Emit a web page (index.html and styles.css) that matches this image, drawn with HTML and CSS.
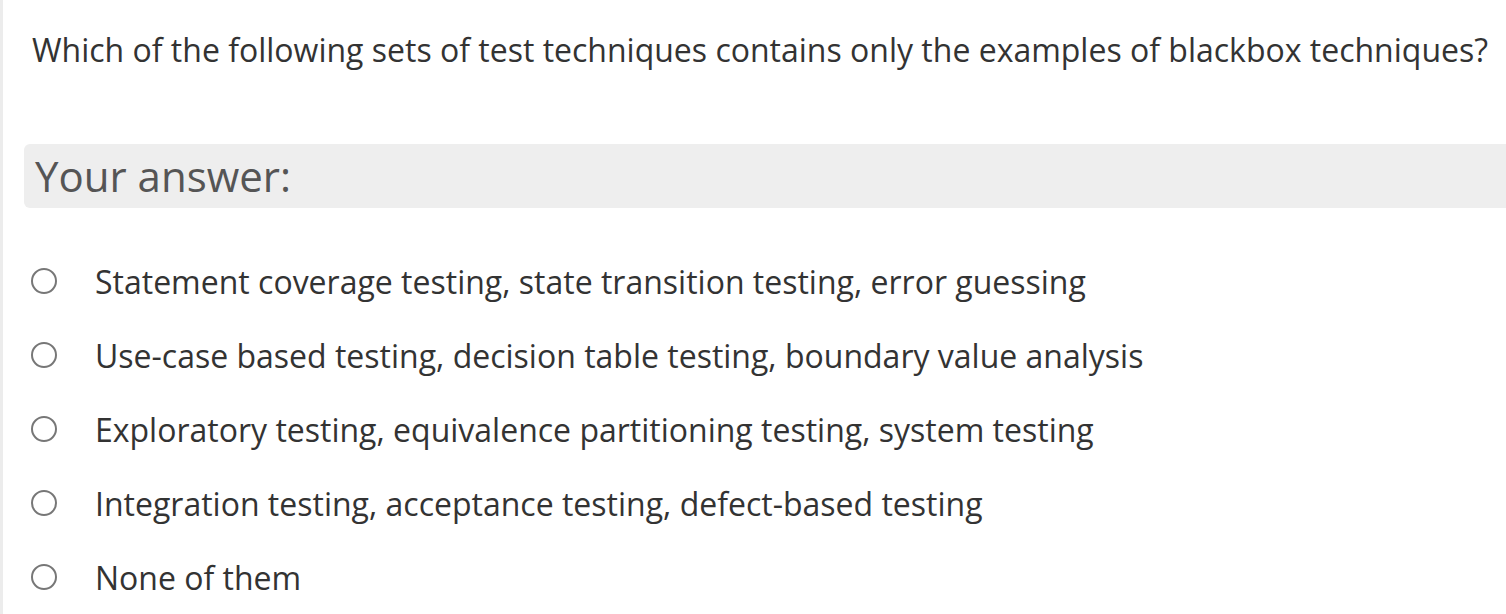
FILE: index.html
```html
<!DOCTYPE html>
<html>
<head>
<meta charset="utf-8">
<link rel="stylesheet" href="styles.css">
</head>
<body>
<div class="page">
  <div class="question">Which of the following sets of test techniques contains only the examples of blackbox techniques?</div>
  <div class="answer-head">Your answer:</div>
  <ul class="options">
    <li class="option"><span class="radio"></span><span class="label">Statement coverage testing, state transition testing, error guessing</span></li>
    <li class="option"><span class="radio"></span><span class="label">Use-case based testing, decision table testing, boundary value analysis</span></li>
    <li class="option"><span class="radio"></span><span class="label">Exploratory testing, equivalence partitioning testing, system testing</span></li>
    <li class="option"><span class="radio"></span><span class="label">Integration testing, acceptance testing, defect-based testing</span></li>
    <li class="option"><span class="radio"></span><span class="label">None of them</span></li>
  </ul>
</div>
</body>
</html>
```
FILE: styles.css
```css
html, body {
  margin: 0;
  padding: 0;
  background: #fff;
}
body {
  font-family: "Open Sans", "Liberation Sans", sans-serif;
  color: #333;
}
.page {
  border-left: 3px solid #ececec;
  min-height: 614px;
  box-sizing: border-box;
  padding: 22px 0 0 21px;
}
.question {
  font-size: 32px;
  line-height: 56px;
  padding-left: 8px;
  color: #333;
  white-space: nowrap;
}
.answer-head {
  margin-top: 66px;
  background: #eeeeee;
  border-radius: 6px 0 0 6px;
  height: 64px;
  box-sizing: border-box;
  font-size: 42px;
  line-height: 64px;
  padding-left: 11px;
  color: #555;
}
.options {
  list-style: none;
  margin: 36px 0 0 0;
  padding: 0;
}
.option {
  display: flex;
  align-items: center;
  height: 74px;
}
.radio {
  width: 26px;
  height: 26px;
  box-sizing: border-box;
  border: 2px solid #777;
  border-radius: 50%;
  margin-left: 7px;
  margin-right: 38px;
  flex: none;
}
.label {
  font-size: 32px;
  color: #333;
}
```
